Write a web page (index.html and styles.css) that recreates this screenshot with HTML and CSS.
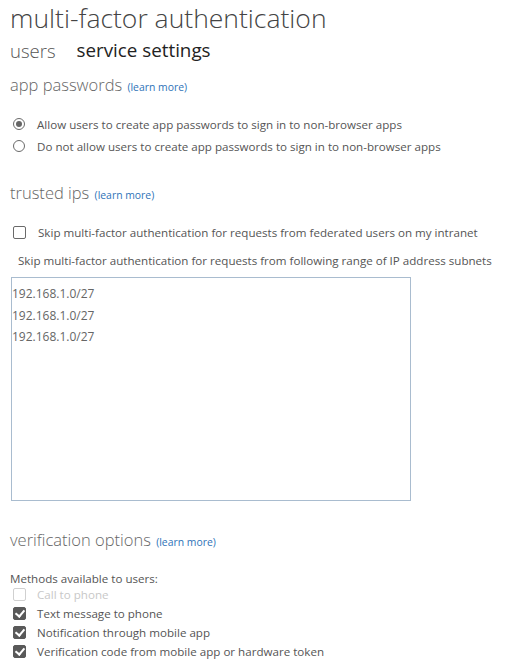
FILE: index.html
```html
<!DOCTYPE html>
<html>
<head>
<meta charset="utf-8">
<link rel="stylesheet" href="styles.css">
</head>
<body>
<div class="page">
  <h1 class="title">multi-factor authentication</h1>
  <nav class="tabs">
    <span class="tab">users</span>
    <span class="tab tab-active">service settings</span>
  </nav>

  <section class="section section-app">
    <h2 class="section-title">app passwords <a class="learn">(learn more)</a></h2>
    <div class="options">
      <label class="row"><span class="radio radio-on"></span><span>Allow users to create app passwords to sign in to non-browser apps</span></label>
      <label class="row"><span class="radio"></span><span>Do not allow users to create app passwords to sign in to non-browser apps</span></label>
    </div>
  </section>

  <section class="section section-ips">
    <h2 class="section-title">trusted ips <a class="learn">(learn more)</a></h2>
    <label class="row row-check"><span class="check"></span><span>Skip multi-factor authentication for requests from federated users on my intranet</span></label>
    <p class="hint">Skip multi-factor authentication for requests from following range of IP address subnets</p>
    <div class="ipbox">
      <div class="ip">192.168.1.0/27</div>
      <div class="ip">192.168.1.0/27</div>
      <div class="ip">192.168.1.0/27</div>
    </div>
  </section>

  <section class="section section-verify">
    <h2 class="section-title">verification options <a class="learn">(learn more)</a></h2>
    <p class="methods">Methods available to users:</p>
    <div class="checks">
      <label class="crow crow-disabled"><span class="check check-disabled"></span><span>Call to phone</span></label>
      <label class="crow"><span class="check check-on"></span><span>Text message to phone</span></label>
      <label class="crow"><span class="check check-on"></span><span>Notification through mobile app</span></label>
      <label class="crow"><span class="check check-on"></span><span>Verification code from mobile app or hardware token</span></label>
    </div>
  </section>
</div>
</body>
</html>
```

FILE: styles.css
```css
* { box-sizing: border-box; }
html, body { margin: 0; padding: 0; background: #fff; }
body {
  font-family: "Open Sans", "Noto Sans", "DejaVu Sans", sans-serif;
  color: #505050;
  font-size: 11.6px;
}
.page { padding: 0 0 0 10px; }

.title {
  margin: 0;
  font-weight: 300;
  font-size: 26.5px;
  line-height: 36px;
  color: #444;
  height: 36px;
}

.tabs {
  display: flex;
  gap: 21px;
  height: 28px;
  align-items: center;
}
.tab {
  font-size: 18.5px;
  font-weight: 300;
  color: #555;
}
.tab-active { color: #222; font-weight: 400; font-size: 18.8px; }

.section-title {
  margin: 0;
  font-size: 16.5px;
  font-weight: 300;
  color: #666;
  line-height: 22px;
}
.learn {
  font-size: 10.4px;
  color: #2e73b8;
  font-weight: 400;
  margin-left: 1px;
}

.section-app { margin-top: 10px; }
.options { margin-top: 15px; display: flex; flex-direction: column; }
.row {
  display: flex;
  align-items: center;
  gap: 12px;
  height: 22px;
  padding-left: 3px;
  color: #555;
}
.radio {
  width: 12px; height: 12px;
  border: 1px solid #6a6a6a;
  border-radius: 50%;
  flex: none;
  position: relative;
  background: #fff;
}
.radio-on::after {
  content: "";
  position: absolute;
  left: 2px; top: 2px;
  width: 6px; height: 6px;
  border-radius: 50%;
  background: #666;
}

.section-ips { margin-top: 25px; }
.row-check { margin-top: 15px; }
.check {
  width: 13px; height: 13px;
  border: 1px solid #6a6a6a;
  border-radius: 2px;
  flex: none;
  background: #fff;
  position: relative;
}
.hint {
  margin: 9px 0 0 8px;
  line-height: 18px;
  color: #555;
}
.ipbox {
  margin-top: 7px;
  margin-left: 1px;
  width: 400px;
  height: 224px;
  border: 1px solid #a9bccf;
  padding: 5px 0 0 0;
}
.ip {
  line-height: 21.5px;
  font-size: 12px;
  color: #666;
}

.section-verify { margin-top: 28px; }
.methods {
  margin: 18px 0 0 0;
  line-height: 16px;
  color: #555;
}
.checks { display: flex; flex-direction: column; margin-top: -2px; }
.crow {
  display: flex;
  align-items: center;
  gap: 11px;
  height: 19px;
  padding-left: 3px;
  color: #555;
}
.crow-disabled { color: #c8c8c8; }
.check-disabled { border-color: #d0d0d0; }
.check-on {
  background: #595959;
  border-color: #595959;
}
.check-on::after {
  content: "";
  position: absolute;
  left: 3px; top: 0px;
  width: 4px; height: 7px;
  border: solid #fff;
  border-width: 0 2px 2px 0;
  transform: rotate(40deg);
}
```
